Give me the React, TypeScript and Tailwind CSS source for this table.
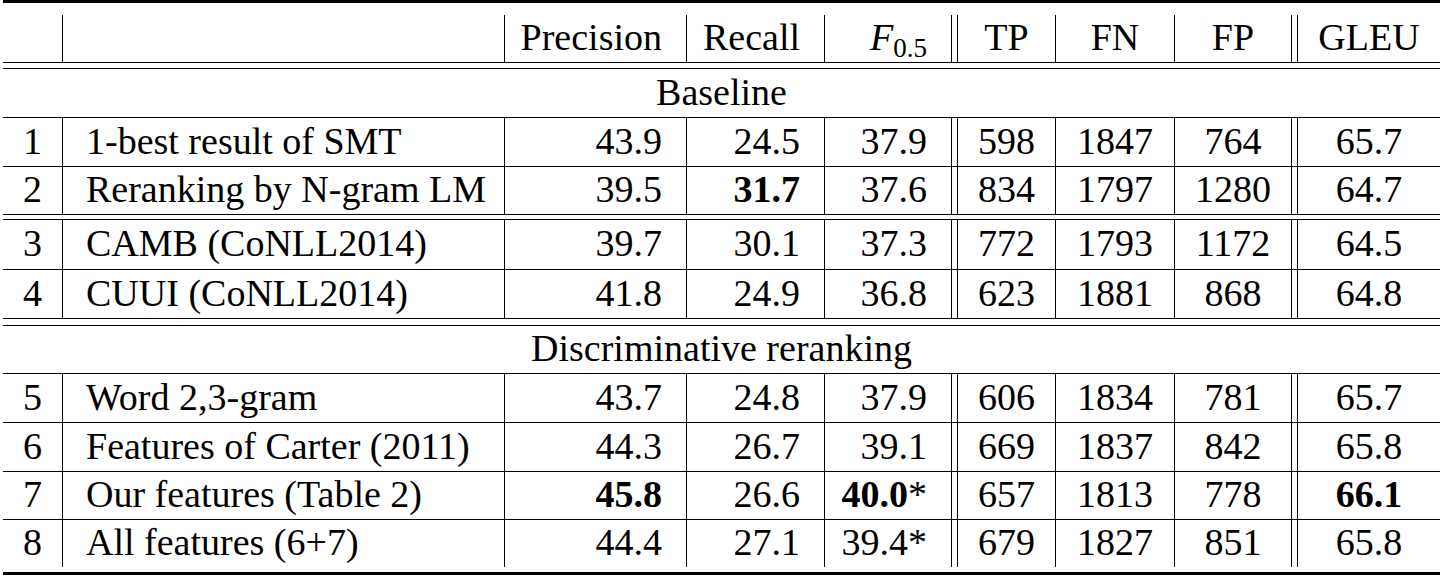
import React from 'react';

type Row = {
  id: string;
  name: string;
  vals: string[];
  bold?: number[];
};

const baseline: Row[] = [
  { id: '1', name: '1-best result of SMT', vals: ['43.9', '24.5', '37.9', '598', '1847', '764', '65.7'] },
  { id: '2', name: 'Reranking by N-gram LM', vals: ['39.5', '31.7', '37.6', '834', '1797', '1280', '64.7'], bold: [1] },
];

const conll: Row[] = [
  { id: '3', name: 'CAMB (CoNLL2014)', vals: ['39.7', '30.1', '37.3', '772', '1793', '1172', '64.5'] },
  { id: '4', name: 'CUUI (CoNLL2014)', vals: ['41.8', '24.9', '36.8', '623', '1881', '868', '64.8'] },
];

const discriminative: Row[] = [
  { id: '5', name: 'Word 2,3-gram', vals: ['43.7', '24.8', '37.9', '606', '1834', '781', '65.7'] },
  { id: '6', name: 'Features of Carter (2011)', vals: ['44.3', '26.7', '39.1', '669', '1837', '842', '65.8'] },
  { id: '7', name: 'Our features (Table 2)', vals: ['45.8', '26.6', '40.0*', '657', '1813', '778', '66.1'], bold: [0, 2, 6] },
  { id: '8', name: 'All features (6+7)', vals: ['44.4', '27.1', '39.4*', '679', '1827', '851', '65.8'] },
];

const grid =
  'grid grid-cols-[60px_442px_182px_138px_127px_6px_98px_119px_117px_6px_142px]';

// renders "40.0*" as bold number with a plain asterisk
const Value = ({ text, bold }: { text: string; bold: boolean }) => {
  const star = text.endsWith('*');
  const num = star ? text.slice(0, -1) : text;
  return (
    <span>
      <span className={bold ? 'font-bold' : ''}>{num}</span>
      {star && <span>*</span>}
    </span>
  );
};

const TableRow = ({ row, height, last }: { row: Row; height: string; last?: boolean }) => {
  const b = (i: number) => (row.bold ?? []).includes(i);
  return (
    <div className={`${grid} ${height} ${last ? '' : 'border-b border-black'}`}>
      <div className="flex items-center justify-center border-r border-black pb-[3px]">{row.id}</div>
      <div className="flex items-center pl-[23px] border-r border-black pb-[3px]">{row.name}</div>
      <div className="flex items-center justify-end pr-[24px] border-r border-black pb-[3px]">
        <Value text={row.vals[0]} bold={b(0)} />
      </div>
      <div className="flex items-center justify-end pr-[24px] border-r border-black pb-[3px]">
        <Value text={row.vals[1]} bold={b(1)} />
      </div>
      <div className="flex items-center justify-end pr-[24px] border-r border-black pb-[3px]">
        <Value text={row.vals[2]} bold={b(2)} />
      </div>
      <div className="border-r border-black" />
      <div className="flex items-center justify-center border-r border-black pb-[3px]">
        <Value text={row.vals[3]} bold={b(3)} />
      </div>
      <div className="flex items-center justify-center border-r border-black pb-[3px]">
        <Value text={row.vals[4]} bold={b(4)} />
      </div>
      <div className="flex items-center justify-center border-r border-black pb-[3px]">
        <Value text={row.vals[5]} bold={b(5)} />
      </div>
      <div className="border-r border-black" />
      <div className="flex items-center justify-center pb-[3px]">
        <Value text={row.vals[6]} bold={b(6)} />
      </div>
    </div>
  );
};

const SectionRow = ({ title, height }: { title: string; height: string }) => (
  <div className={`flex items-center justify-center ${height} border-b border-black pb-[3px]`}>{title}</div>
);

const Gap = ({ height }: { height: string }) => <div className={`${height} border-b border-black`} />;

export default function App() {
  return (
    <div className="w-[1443px] h-[578px] bg-white text-black font-['Liberation_Serif','Times_New_Roman',serif] text-[38px] leading-none">
      <div className="ml-[3px] w-[1437px]">
        <div className="h-[3px] bg-black" />
        <div className="h-[12px]" />

        {/* header */}
        <div className={`${grid} h-[48px] border-b border-black`}>
          <div className="border-r border-black" />
          <div className="border-r border-black" />
          <div className="flex items-center justify-end pr-[24px] border-r border-black pb-[4px]">Precision</div>
          <div className="flex items-center justify-end pr-[24px] border-r border-black pb-[4px]">Recall</div>
          <div className="flex items-center justify-end pr-[24px] border-r border-black pb-[4px]">
            <span>
              <i>F</i>
              <span className="relative top-[7px] text-[27px]">0.5</span>
            </span>
          </div>
          <div className="border-r border-black" />
          <div className="flex items-center justify-center border-r border-black pb-[4px]">TP</div>
          <div className="flex items-center justify-center border-r border-black pb-[4px]">FN</div>
          <div className="flex items-center justify-center border-r border-black pb-[4px]">FP</div>
          <div className="border-r border-black" />
          <div className="flex items-center justify-center pb-[4px]">GLEU</div>
        </div>
        <Gap height="h-[6px]" />

        <SectionRow title="Baseline" height="h-[49px]" />
        <TableRow row={baseline[0]} height="h-[49px]" />
        <TableRow row={baseline[1]} height="h-[48px]" />
        <Gap height="h-[5px]" />
        <TableRow row={conll[0]} height="h-[50px]" />
        <TableRow row={conll[1]} height="h-[49px]" />
        <Gap height="h-[7px]" />

        <SectionRow title="Discriminative reranking" height="h-[48px]" />
        <TableRow row={discriminative[0]} height="h-[49px]" />
        <TableRow row={discriminative[1]} height="h-[49px]" />
        <TableRow row={discriminative[2]} height="h-[48px]" />
        <TableRow row={discriminative[3]} height="h-[47px]" last />

        <div className="h-[5px]" />
        <div className="h-[3px] bg-black" />
      </div>
    </div>
  );
}
